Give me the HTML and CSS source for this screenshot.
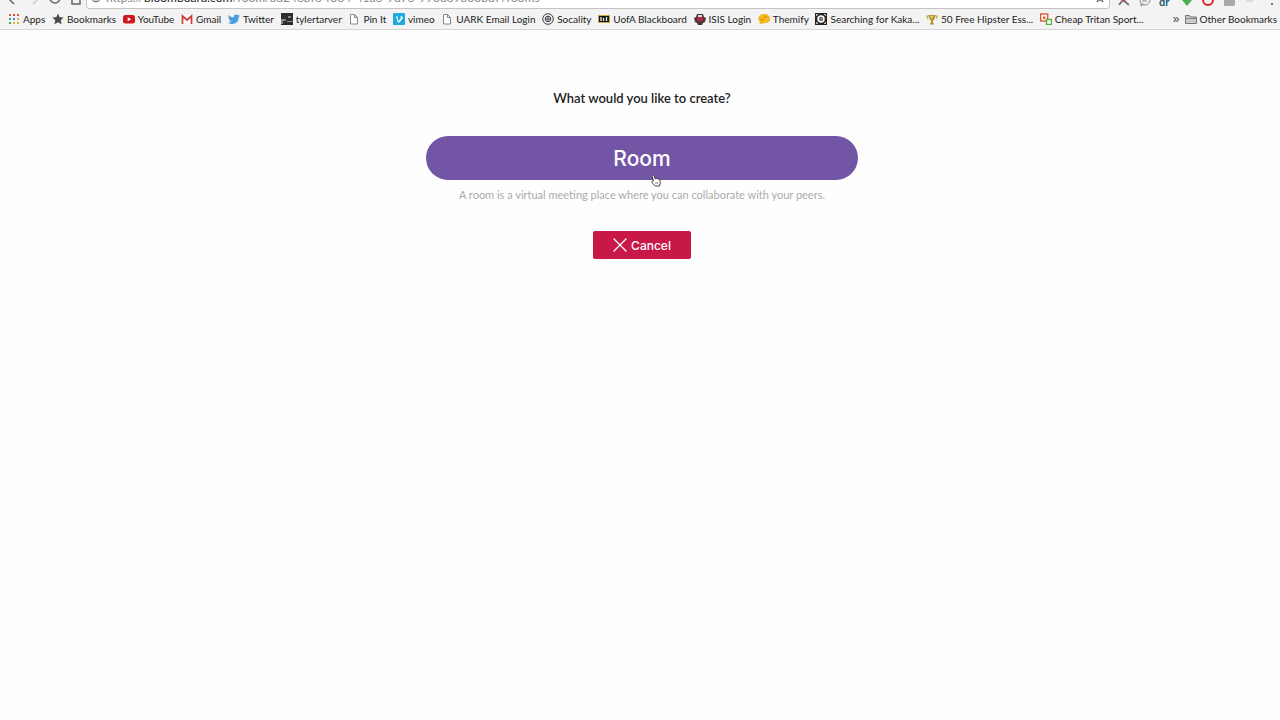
FILE: index.html
```
<!DOCTYPE html>
<html lang="en">
<head>
    <meta charset="UTF-8">
    <meta name="viewport" content="width=device-width, initial-scale=1.0">
    <title>Create a room</title>
    <link rel="stylesheet" href="styles.css">
</head>
<body>
    <header class="browser">
        <!-- Address bar, scrolled mostly out of view -->
        <div class="toolbar">
            <div class="nav">
                <svg class="tool" viewBox="0 0 14 14"><path d="M8 2L3 7l5 5M3 7h10" stroke="#666" stroke-width="1.5" fill="none"/></svg>
                <svg class="tool" viewBox="0 0 14 14"><path d="M6 2l5 5-5 5M11 7H1" stroke="#ccc" stroke-width="1.5" fill="none"/></svg>
                <svg class="tool" viewBox="0 0 14 14"><circle cx="7" cy="6" r="5" stroke="#666" stroke-width="1.5" fill="none"/></svg>
                <svg class="tool" viewBox="0 0 14 14"><path d="M3 4v8h8V4M1 6l6-5 6 5" stroke="#666" stroke-width="1.5" fill="none"/></svg>
            </div>
            <div class="address">
                <svg class="info" viewBox="0 0 10 10"><circle cx="5" cy="5" r="4" stroke="#666" fill="none"/><path d="M5 4v4" stroke="#666"/></svg>
                <span class="url">https://<b>bloomboard.com</b>/room/a8246bf6-f364-41a6-9d76-990d89b00bd7/rooms</span>
                <svg class="info" viewBox="0 0 10 10"><path d="M5 0l1 4h4L7 6l1 3-3-2-3 2 1-3-3-2h4z" stroke="#666" fill="none"/></svg>
            </div>
            <div class="extensions">
                <svg class="tool" viewBox="0 0 14 14"><path d="M2 12l4-5 6 5" stroke="#777" stroke-width="2" fill="none"/><path d="M6 8l5-4" stroke="#d33" stroke-width="2"/></svg>
                <svg class="tool" viewBox="0 0 14 14"><circle cx="7" cy="7" r="5" stroke="#888" fill="none"/><path d="M4 8h5M3 10v3l3-2" stroke="#888" fill="none"/></svg>
                <span class="dr">dr</span>
                <svg class="tool" viewBox="0 0 14 14"><path d="M2 7h10l-5 6z" fill="#4cb04f"/></svg>
                <svg class="tool" viewBox="0 0 14 14"><circle cx="7" cy="7" r="5" stroke="#d9232e" stroke-width="2" fill="none"/></svg>
                <svg class="tool" viewBox="0 0 14 14"><rect x="2" y="3" width="11" height="10" rx="1" fill="#aaa"/></svg>
                <svg class="tool" viewBox="0 0 14 14"><path d="M3 8h7" stroke="#ddd" stroke-width="2"/></svg>
                <svg class="tool" viewBox="0 0 14 14"><circle cx="8" cy="11" r="1" fill="#555"/></svg>
            </div>
        </div>

        <nav class="bookmarks">
            <div class="links">
                <a href="#"><svg class="icon" viewBox="0 0 12 12"><path d="M1 1h2v2H1zM9 1h2v2H9z" fill="#e05b4b"/><path d="M5 1h2v2H5z" fill="#d9493a"/><path d="M1 5h2v2H1z" fill="#3aa757"/><path d="M5 5h2v2H5z" fill="#4a86e0"/><path d="M9 5h2v2H9z" fill="#e8a53a"/><path d="M1 9h2v2H1z" fill="#3aa757"/><path d="M5 9h2v2H5zM9 9h2v2H9z" fill="#e2b23f"/></svg>Apps</a>
                <a href="#"><svg class="icon" viewBox="0 0 12 12"><path d="M6 .5l1.700 3.700 4 .4-3 2.700.9 4L6 9.300l-3.600 2 .9-4-3-2.700 4-.4z" fill="#4a4a4a"/></svg>Bookmarks</a>
                <a href="#"><svg class="icon" viewBox="0 0 12 12"><rect y="2" width="12" height="8.500" rx="2.500" fill="#cc181e"/><path d="M4.700 4.300v4l3.500-2z" fill="#fff"/></svg>YouTube</a>
                <a href="#"><svg class="icon" viewBox="0 0 12 12"><path d="M1 2h10v8.500H1z" fill="#fff"/><path d="M1.500 11V3L6 7l4.500-4v8" stroke="#d23c35" stroke-width="1.700" fill="none"/></svg>Gmail</a>
                <a href="#"><svg class="icon" viewBox="0 0 12 12"><path d="M.7 2C2 3.600 3.800 4.400 5.800 4.500 5.500 2.600 6.700 1.500 8.200 1.500c.8 0 1.400.3 1.800.8l1.600-.6-.9 1.400 1.200-.2-1.200 1.200C10.700 8 8.300 11 4.400 11 2.800 11 1.200 10.600 0 9.700c1.300.1 2.400-.2 3.400-1C2.300 8.600 1.500 8 1.200 7h1C1 6.600.4 5.700.4 4.500l1 .3C.4 4 .1 3 .7 2z" fill="#4a9fdc"/></svg>Twitter</a>
                <a href="#"><svg class="icon" viewBox="0 0 12 12"><path d="M0 0h12v12H0z" fill="#2c2c2c"/><path d="M0 6h5v2H2v3H0zM7 3h3v2H7zM6 8h6v1H6z" fill="#888"/></svg>tylertarver</a>
                <a href="#"><svg class="icon" viewBox="0 0 12 12"><path d="M2.500 1.500h4l3 3v6.500h-7zM6.500 1.500v3h3" stroke="#888" fill="#fff"/></svg>Pin It</a>
                <a href="#"><svg class="icon" viewBox="0 0 12 12"><rect width="12" height="12" rx="1" fill="#20a9df"/><path d="M2.500 4l1.800-1 1.300 5.200L8 5.200c.2-.8-.3-.9-1-.6.8-2 3-1.900 2.700.1C9.400 6.500 6.600 9.600 5.500 9.600 4.300 9.600 4 5.500 3.500 4.500z" fill="#fff"/></svg>vimeo</a>
                <a href="#"><svg class="icon" viewBox="0 0 12 12"><path d="M2.500 1.500h4l3 3v6.500h-7zM6.500 1.500v3h3" stroke="#888" fill="#fff"/></svg>UARK Email Login</a>
                <a href="#"><svg class="icon" viewBox="0 0 12 12"><circle cx="6" cy="6" r="5.300" stroke="#444" fill="#eee"/><circle cx="6" cy="6" r="2.800" stroke="#444" fill="none"/><path d="M3 6h6M6 3v6" stroke="#444"/></svg>Socality</a>
                <a href="#"><svg class="icon" viewBox="0 0 12 12"><path d="M.5 2.500h11v7H.5z" fill="#171717" stroke="#c9a93c"/><path d="M3 4v4M5.500 5v3M8.500 4v4" stroke="#eee" stroke-width="1.300"/></svg>UofA Blackboard</a>
                <a href="#"><svg class="icon" viewBox="0 0 12 12"><path d="M3 1h6l1 3 2 1-1 4-2 1-1 2H4l-1-2-2-1-1-4 2-1z" fill="#45383c"/><path d="M3 4h6v3L6 9 3 7z" fill="#b62b41"/><path d="M4 2h4v2H4z" fill="#ddd"/></svg>ISIS Login</a>
                <a href="#"><svg class="icon" viewBox="0 0 12 12"><path d="M6 1c4 0 6 2 6 5s-2 4-5 4l-4 1-2-1 1-1C-1 7 0 1 6 1z" fill="#f2ba1b"/><path d="M2 7h4M6 4h3" stroke="#c98a0a"/></svg>Themify</a>
                <a href="#"><svg class="icon" viewBox="0 0 12 12"><path d="M0 0h12v12H0z" fill="#252525"/><circle cx="6" cy="6" r="3" stroke="#fff" stroke-width="1.500" fill="#777"/><path d="M1.500 3V1.500H3M9 1.500h1.500V3M1.500 9v1.500H3M9 10.500h1.500V9" stroke="#ccc" fill="none"/></svg>Searching for Kaka...</a>
                <a href="#"><svg class="icon" viewBox="0 0 12 12"><path d="M2 2h8L8 7 7 8v2h1v1.500H4V10h1V8L4 7z" fill="#b39b31"/><path d="M2 3H.7L2 6M10 3h1.300L10 6" stroke="#b39b31" fill="none"/><path d="M4 3h3L6 6z" fill="#e6d779"/></svg>50 Free Hipster Ess...</a>
                <a href="#"><svg class="icon" viewBox="0 0 12 12"><rect x=".7" y="1" width="7" height="7" stroke="#d95b35" stroke-width="1.400" fill="#fff"/><path d="M3 3.500h2.500V6H3z" fill="#d95b35"/><rect x="6.500" y="6.500" width="5" height="5" stroke="#58ad3c" stroke-width="1.400" fill="#fff"/></svg>Cheap Tritan Sport...</a>
            </div>
            <div class="more">
                <button type="button" aria-label="More bookmarks">»</button>
                <a href="#"><svg class="icon" viewBox="0 0 12 12"><path d="M.5 10.500v-8h4l1 1.500h6v6.500z" stroke="#777" fill="#c9c9c9"/><path d="M.5 5.500h11" stroke="#888"/></svg>Other Bookmarks</a>
            </div>
        </nav>
    </header>

    <main class="create">
        <h1>What would you like to create?</h1>
        <div class="option">
            <button type="button" class="room">Room</button>
            <!-- Hand pointer over the room button -->
            <svg class="pointer" viewBox="0 0 10 13"><path d="M2.500 7L1.200 2.200C1 1 2.500.6 3 1.700L4.200 5c.5-.8 1.500-.6 1.700.1.500-.7 1.300-.5 1.600.2.600-.5 1.400-.1 1.500.7l.3 2.500L8.500 12H4.200L1 8.700c-.8-1 .2-2 1-1.500z" fill="#fff" stroke="#333" stroke-width=".9"/><path d="M5 8v2M6.500 8v2" stroke="#555" stroke-width=".6"/></svg>
        </div>
        <p>A room is a virtual meeting place where you can collaborate with your peers.</p>
        <button type="button" class="cancel">
            <svg class="cross" viewBox="0 0 14 14"><path d="M1 1l12 12M13 1L1 13" stroke="#fff" stroke-width="1.300" stroke-linecap="round"/></svg>
            Cancel
        </button>
    </main>
</body>
</html>
```
FILE: styles.css
```
body {
    margin: 0;
    background: #fefefe;
    font-family: Lato, sans-serif;
    color: #222;
}

button {
    border: none;
    padding: 0;
    cursor: pointer;
}

.browser {
    background: #f3f3f3;
    border-bottom: 1px solid #d5d5d5;
}

.toolbar {
    display: flex;
    align-items: flex-end;
    height: 9px;
    overflow: hidden;
}

.nav {
    display: flex;
    gap: 7px;
    width: 86px;
    padding-left: 6px;
    box-sizing: border-box;
    margin-bottom: 3px;
}

.tool {
    flex: none;
    width: 14px;
    height: 14px;
}

.address {
    flex: 1;
    display: flex;
    align-items: center;
    gap: 5px;
    height: 22px;
    padding: 0 4px;
    background: #fff;
    border: 1px solid #c4c4c4;
    border-radius: 3px;
    box-sizing: border-box;
}

.info {
    flex: none;
    width: 10px;
    height: 10px;
}

.url {
    flex: 1;
    font-size: 12px;
    line-height: 16px;
    color: #888;
}

.url b {
    font-weight: normal;
    color: #222;
}

.extensions {
    display: flex;
    align-items: flex-end;
    gap: 7px;
    padding: 0 2px 0 7px;
    margin-bottom: 2px;
}

.dr {
    width: 14px;
    font-size: 11px;
    line-height: 11px;
    font-weight: bold;
    color: #24586f;
}

.bookmarks {
    display: flex;
    justify-content: space-between;
    height: 20px;
    padding: 0 3px 0 8px;
    font-size: 10px;
    line-height: 20px;
    white-space: nowrap;
}

.links {
    flex: 1;
    display: flex;
    justify-content: space-between;
    margin-right: 29px;
}

.bookmarks a {
    display: flex;
    align-items: center;
    gap: 3px;
    color: #222;
    text-decoration: none;
}

.more {
    display: flex;
    align-items: center;
    gap: 5px;
}

.more button {
    background: none;
    font-size: 12px;
    line-height: 20px;
    color: #444;
}

.icon {
    flex: none;
    width: 12px;
    height: 12px;
}

.create {
    display: flex;
    flex-direction: column;
    align-items: center;
    padding: 58px 0 0 4px;
}

.create h1 {
    margin: 0 0 28px;
    font-size: 13px;
    line-height: 20px;
    font-weight: 600;
}

.option {
    position: relative;
    width: 90%;
    max-width: 432px;
}

.room {
    display: block;
    width: 100%;
    height: 44px;
    border-radius: 22px;
    background: #7355a6;
    color: #fff;
    font-family: Inter, sans-serif;
    font-size: 21px;
    font-weight: 500;
}

.pointer {
    position: absolute;
    left: 52%;
    top: 38px;
    width: 10px;
    height: 13px;
}

.create p {
    margin: 5px 0 26px;
    font-size: 11px;
    line-height: 20px;
    color: #aaa;
}

.cancel {
    display: flex;
    align-items: center;
    gap: 4px;
    height: 28px;
    padding: 0 20px;
    border-radius: 2px;
    background: #c81848;
    color: #fff;
    font-family: Inter, sans-serif;
    font-size: 12px;
    font-weight: 500;
}

.cross {
    width: 14px;
    height: 14px;
}
```
